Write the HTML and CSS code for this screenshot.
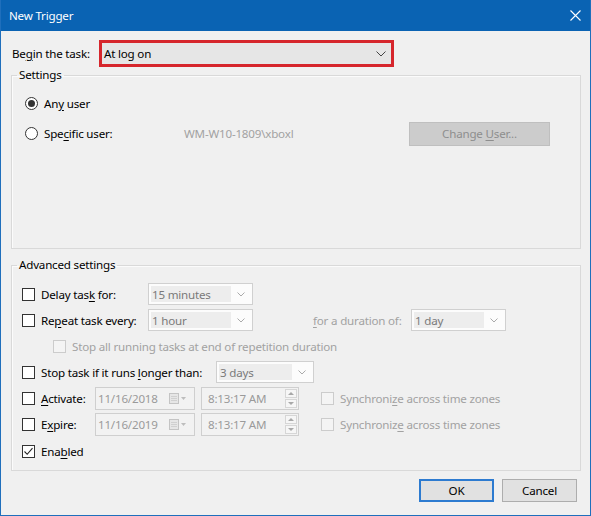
FILE: index.html
```html
<!DOCTYPE html>
<html>
<head>
<meta charset="utf-8">
<link rel="stylesheet" href="styles.css">
</head>
<body>
<div class="window">
  <div class="titlebar">
    <span class="title">New Trigger</span>
    <svg class="close" width="11" height="11" viewBox="0 0 11 11"><path d="M0.5 0.5 L10.5 10.5 M10.5 0.5 L0.5 10.5" stroke="#fff" stroke-width="1.1" fill="none"/></svg>
  </div>
  <div class="content">
    <div class="begin-row">
      <span class="begin-label">Be<u>g</u>in the task:</span>
      <div class="begin-select">
        <span class="begin-val">At log on</span>
        <svg class="chev" width="10" height="6" viewBox="0 0 10 6"><path d="M0.5 0.5 L5 5 L9.5 0.5" stroke="#444" stroke-width="1" fill="none"/></svg>
      </div>
    </div>

    <fieldset class="group settings">
      <legend>Settings</legend>
      <div class="settings-body">
        <div class="row any-row">
          <span class="radio checked"></span>
          <span class="lbl">An<u>y</u> user</span>
        </div>
        <div class="row specific-row">
          <span class="radio"></span>
          <span class="lbl spec-lbl">Spe<u>c</u>ific user:</span>
          <span class="account">WM-W10-1809\xboxl</span>
          <span class="change-btn"><span>Change <u>U</u>ser...</span></span>
        </div>
      </div>
    </fieldset>

    <fieldset class="group advanced">
      <legend>Advanced settings</legend>
      <div class="adv-rows">
        <div class="row">
          <span class="check"></span>
          <span class="lbl w-delay">Delay tas<u>k</u> for:</span>
          <div class="combo w-combo1"><span class="val">15 minutes</span><span class="arrow"><svg width="8" height="5" viewBox="0 0 8 5"><path d="M0.5 0.5 L4 4 L7.5 0.5" stroke="#aaa" fill="none"/></svg></span></div>
        </div>
        <div class="row">
          <span class="check"></span>
          <span class="lbl w-delay">Re<u>p</u>eat task every:</span>
          <div class="combo w-combo1"><span class="val">1 hour</span><span class="arrow"><svg width="8" height="5" viewBox="0 0 8 5"><path d="M0.5 0.5 L4 4 L7.5 0.5" stroke="#aaa" fill="none"/></svg></span></div>
          <span class="lbl dis duration-lbl"><u>f</u>or a duration of:</span>
          <div class="combo w-combo2"><span class="val">1 day</span><span class="arrow"><svg width="8" height="5" viewBox="0 0 8 5"><path d="M0.5 0.5 L4 4 L7.5 0.5" stroke="#aaa" fill="none"/></svg></span></div>
        </div>
        <div class="row indent">
          <span class="check disabled"></span>
          <span class="lbl dis">Stop all running tasks at end of repetition duration</span>
        </div>
        <div class="row">
          <span class="check"></span>
          <span class="lbl w-stop">Stop task if it runs <u>l</u>onger than:</span>
          <div class="combo w-combo3"><span class="val">3 days</span><span class="arrow"><svg width="8" height="5" viewBox="0 0 8 5"><path d="M0.5 0.5 L4 4 L7.5 0.5" stroke="#aaa" fill="none"/></svg></span></div>
        </div>
        <div class="row">
          <span class="check"></span>
          <span class="lbl w-act"><u>A</u>ctivate:</span>
          <div class="datebox">
            <span class="dval">11/16/2018</span>
            <svg class="cal" width="18" height="11" viewBox="0 0 18 11"><rect x="0.5" y="0.5" width="9" height="10" fill="#e6e6e6" stroke="#c4c4c4"/><path d="M2 3.5 H8 M2 5.5 H8 M2 7.5 H8" stroke="#d0d0d0"/><path d="M12 4 L17 4 L14.5 7 Z" fill="#bdbdbd"/></svg>
          </div>
          <div class="timebox">
            <span class="dval">8:13:17 AM</span>
            <span class="spin"><span class="sp up"></span><span class="sp down"></span></span>
          </div>
          <span class="check disabled sync"></span>
          <span class="lbl dis">Synchroni<u>z</u>e across time zones</span>
        </div>
        <div class="row">
          <span class="check"></span>
          <span class="lbl w-act">E<u>x</u>pire:</span>
          <div class="datebox">
            <span class="dval">11/16/2019</span>
            <svg class="cal" width="18" height="11" viewBox="0 0 18 11"><rect x="0.5" y="0.5" width="9" height="10" fill="#e6e6e6" stroke="#c4c4c4"/><path d="M2 3.5 H8 M2 5.5 H8 M2 7.5 H8" stroke="#d0d0d0"/><path d="M12 4 L17 4 L14.5 7 Z" fill="#bdbdbd"/></svg>
          </div>
          <div class="timebox">
            <span class="dval">8:13:17 AM</span>
            <span class="spin"><span class="sp up"></span><span class="sp down"></span></span>
          </div>
          <span class="check disabled sync"></span>
          <span class="lbl dis">Synchroniz<u>e</u> across time zones</span>
        </div>
        <div class="row enabled-row">
          <span class="check checked"><svg width="11" height="11" viewBox="0 0 11 11"><path d="M1.5 5.5 L4.2 8.3 L9.5 2.2" stroke="#222" stroke-width="1.1" fill="none"/></svg></span>
          <span class="lbl">Ena<u>b</u>led</span>
        </div>
      </div>
    </fieldset>

    <div class="buttons">
      <button class="btn ok">OK</button>
      <button class="btn">Cancel</button>
    </div>
  </div>
</div>
</body>
</html>
```
FILE: styles.css
```css
html, body {
  margin: 0;
  padding: 0;
  background: #f0f0f0;
}
body {
  font-family: "Noto Sans", "Open Sans", sans-serif;
  font-size: 11.6px;
  letter-spacing: -0.2px;
  color: #000;
}
.window {
  width: 591px;
  height: 516px;
  box-sizing: border-box;
  border: 1px solid #1f6fbc;
  border-top: 0;
  background: #f0f0f0;
  display: flex;
  flex-direction: column;
}
.titlebar {
  height: 31px;
  flex: none;
  background: #0a63b3;
  color: #fff;
  display: flex;
  align-items: center;
  justify-content: space-between;
  padding-left: 8px;
}
.title {
  line-height: 16px;
}
.close {
  margin-right: 9px;
}
.content {
  padding: 9px 9px 0 10px;
  display: flex;
  flex-direction: column;
}
.begin-row {
  display: flex;
  align-items: center;
  height: 27px;
}
.begin-label {
  margin-left: 1px;
  width: 87px;
}
.begin-select {
  box-sizing: border-box;
  width: 295px;
  height: 27px;
  border: 3px solid #d6262c;
  background: #e6e6e6;
  display: flex;
  align-items: center;
  justify-content: space-between;
  padding: 0 5px 0 2px;
}
u {
  text-decoration: underline;
  text-underline-offset: 2px;
}
.group {
  margin: 0;
  padding: 0;
  border: 1px solid #d9d9d9;
  min-width: 0;
  box-shadow: inset 1px 1px 0 #fbfbfb;
}
.group legend {
  padding: 0 2px;
  margin-left: 5px;
  line-height: 16px;
}
.settings-body {
  padding: 9px 0 102px 13px;
}
.row {
  display: flex;
  align-items: center;
  height: 22px;
}
.lbl {
  white-space: nowrap;
}
.dis {
  color: #a2a2a2;
}
.radio {
  box-sizing: border-box;
  width: 13px;
  height: 13px;
  border: 1px solid #333;
  border-radius: 50%;
  background: #fff;
  margin-right: 6px;
  display: flex;
  align-items: center;
  justify-content: center;
  flex: none;
}
.radio.checked::after {
  content: "";
  width: 7px;
  height: 7px;
  border-radius: 50%;
  background: #333;
}
.specific-row {
  height: 25px;
  margin-top: 7px;
}
.spec-lbl {
  width: 140px;
}
.account {
  width: 225px;
  color: #a2a2a2;
}
.change-btn {
  box-sizing: border-box;
  width: 141px;
  height: 24px;
  background: #cccccc;
  border: 1px solid #bfbfbf;
  color: #8e8e8e;
  display: flex;
  align-items: center;
  justify-content: center;
}
.advanced {
  margin-top: 8px;
}
.adv-rows {
  display: flex;
  flex-direction: column;
  gap: 4px;
  padding: 10px 0 8px 10px;
}
.check {
  box-sizing: border-box;
  width: 13px;
  height: 13px;
  border: 1px solid #333;
  background: #fff;
  margin-right: 6px;
  flex: none;
  display: flex;
  align-items: center;
  justify-content: center;
}
.check.disabled {
  border-color: #cccccc;
  background: #f4f4f4;
}
.check.checked svg {
  display: block;
}
.indent {
  padding-left: 31px;
}
.w-delay { width: 107px; }
.w-stop { width: 175px; }
.w-act { width: 54px; }
.combo {
  box-sizing: border-box;
  height: 22px;
  border: 1px solid #d0d0d0;
  background: #fcfcfc;
  display: flex;
  align-items: stretch;
  padding: 2px;
}
.combo .val {
  flex: 1;
  background: #ededed;
  color: #7a7a7a;
  display: flex;
  align-items: center;
  padding-left: 1px;
}
.combo .arrow {
  width: 19px;
  display: flex;
  align-items: center;
  justify-content: center;
}
.w-combo1 { width: 105px; }
.w-combo2 { width: 95px; }
.w-combo3 { width: 98px; }
.duration-lbl {
  margin-left: 60px;
  width: 98px;
}
.datebox, .timebox {
  box-sizing: border-box;
  height: 23px;
  border: 1px solid #cfcfcf;
  background: #f2f2f2;
  display: flex;
  align-items: center;
  color: #9a9a9a;
}
.datebox {
  width: 100px;
  padding-left: 2px;
  justify-content: space-between;
  padding-right: 7px;
}
.timebox {
  width: 98px;
  margin-left: 6px;
  padding-left: 6px;
  justify-content: space-between;
  padding-right: 1px;
}
.spin {
  display: flex;
  flex-direction: column;
  gap: 1px;
}
.sp {
  box-sizing: border-box;
  width: 12px;
  height: 9px;
  border: 1px solid #d6d6d6;
  background: #f6f6f6;
  display: flex;
  align-items: center;
  justify-content: center;
}
.sp.up::after {
  content: "";
  border-left: 3px solid transparent;
  border-right: 3px solid transparent;
  border-bottom: 3px solid #a8a8a8;
}
.sp.down::after {
  content: "";
  border-left: 3px solid transparent;
  border-right: 3px solid transparent;
  border-top: 3px solid #a8a8a8;
}
.sync {
  margin-left: 22px;
}
.enabled-row {
  margin-top: 1px;
}
.buttons {
  display: flex;
  justify-content: flex-end;
  gap: 8px;
  margin-top: 8px;
  padding-right: 4px;
}
.btn {
  box-sizing: border-box;
  width: 75px;
  height: 23px;
  font-family: inherit;
  font-size: inherit;
  letter-spacing: inherit;
  background: #e1e1e1;
  border: 1px solid #adadad;
  color: #000;
  padding: 0;
}
.btn.ok {
  border: 2px solid #2d7bd0;
}
```
